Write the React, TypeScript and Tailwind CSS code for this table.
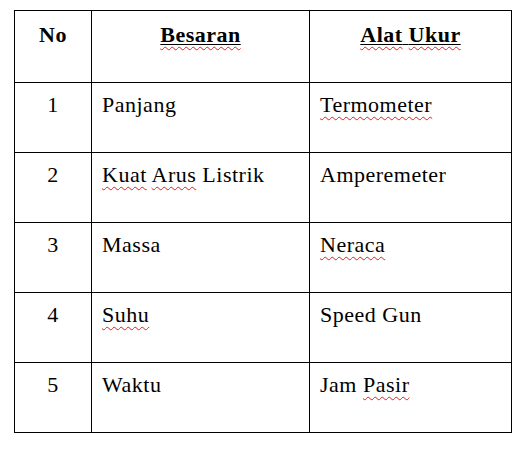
const rows: { no: string; besaran: React.ReactNode; alat: React.ReactNode }[] = [
  { no: "1", besaran: "Panjang", alat: <Sq>Termometer</Sq> },
  {
    no: "2",
    besaran: (
      <>
        <Sq>Kuat</Sq> <Sq>Arus</Sq> Listrik
      </>
    ),
    alat: "Amperemeter",
  },
  { no: "3", besaran: "Massa", alat: <Sq>Neraca</Sq> },
  { no: "4", besaran: <Sq>Suhu</Sq>, alat: "Speed Gun" },
  {
    no: "5",
    besaran: "Waktu",
    alat: (
      <>
        Jam <Sq>Pasir</Sq>
      </>
    ),
  },
];

function Sq({ children }: { children: React.ReactNode }) {
  return (
    <span className="underline decoration-wavy decoration-[#e02020] decoration-[1px] underline-offset-[4px]">
      {children}
    </span>
  );
}

export default function App() {
  return (
    <div
      className="w-[519px] h-[451px] bg-white pl-[14px] pt-[10px] text-black"
      style={{ fontFamily: '"Liberation Serif", "Times New Roman", serif' }}
    >
      <table className="border-collapse text-[22px] leading-[25px] tracking-[0.5px]">
        <thead>
          <tr className="h-[72px]">
            <th className="w-[77px] border border-black align-top pt-[11px] text-center font-bold">
              No
            </th>
            <th className="w-[218px] border border-black align-top pt-[11px] text-center font-bold">
              <span className="underline decoration-black decoration-[1px] underline-offset-[2px]">
                <Sq>Besaran</Sq>
              </span>
            </th>
            <th className="w-[202px] border border-black align-top pt-[11px] text-center font-bold">
              <span className="underline decoration-black decoration-[1px] underline-offset-[2px]">
                <Sq>Alat</Sq> <Sq>Ukur</Sq>
              </span>
            </th>
          </tr>
        </thead>
        <tbody>
          {rows.map((r) => (
            <tr key={r.no} className="h-[70px]">
              <td className="border border-black align-top pt-[9px] text-center">{r.no}</td>
              <td className="border border-black align-top pt-[9px] pl-[10px]">{r.besaran}</td>
              <td className="border border-black align-top pt-[9px] pl-[10px]">{r.alat}</td>
            </tr>
          ))}
        </tbody>
      </table>
    </div>
  );
}
